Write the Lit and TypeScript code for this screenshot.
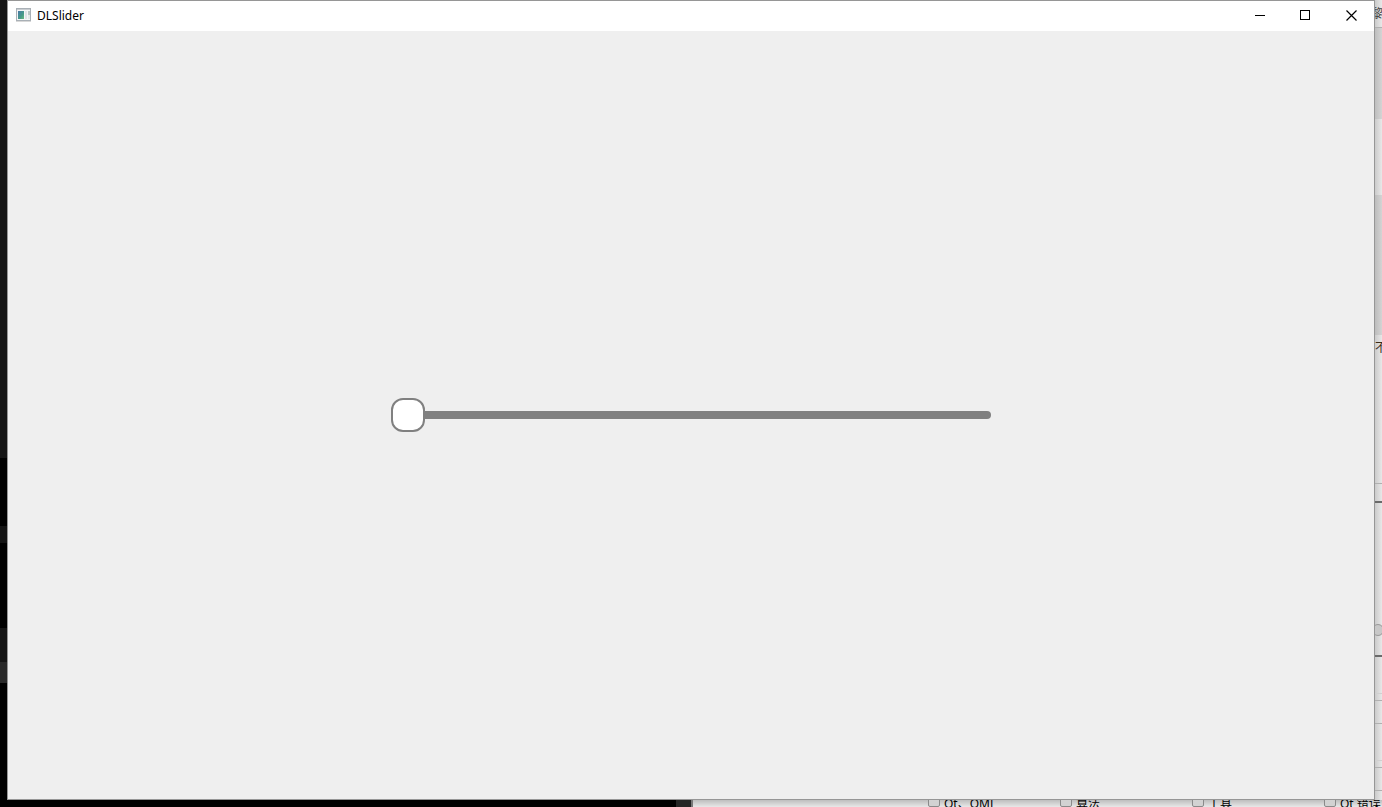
import { LitElement, html, css, svg } from "lit";
import { customElement, state } from "lit/decorators.js";

/* Colour bands of the dark editor visible left of the window. */
const EDITOR_BANDS: Array<[number, string]> = [
  [458, "#151515"],
  [68, "#000000"],
  [17, "#141414"],
  [85, "#000000"],
  [34, "#151515"],
  [21, "#292929"],
  [117, "#000000"],
];

const CATEGORIES = ["Qt、QML", "算法", "工具", "Qt 错误"];

@customElement("app-root")
export class AppRoot extends LitElement {
  @state() private value = 0;

  static styles = css`
    :host {
      display: block;
      height: 100vh;
      overflow: hidden;
      font-family: "Noto Sans", "Noto Sans CJK SC", sans-serif;
      font-size: 12px;
      color: #000;
    }
    * {
      box-sizing: border-box;
    }
    .desktop {
      height: 100%;
      display: grid;
      grid-template-columns: 7px minmax(0, 1fr) 7px;
      grid-template-rows: minmax(0, 1fr) 7px;
    }
    .editor {
      overflow: hidden;
      background: #000;
    }
    .window {
      display: flex;
      flex-direction: column;
      border: 1px solid #969696;
      background: #efefef;
    }
    .titlebar {
      display: flex;
      align-items: center;
      height: 30px;
      flex: none;
      padding-left: 8px;
      background: #fff;
    }
    .app-icon {
      width: 16px;
      height: 16px;
      margin-right: 5px;
    }
    .title {
      flex: 1;
      margin: 0;
      font-size: 12px;
      line-height: 16px;
      font-weight: 400;
    }
    .control {
      display: grid;
      place-items: center;
      width: 45px;
      height: 28px;
      margin-bottom: 2px;
      padding: 0;
      border: 0;
      background: transparent;
    }
    .control.close {
      width: 46px;
    }
    .control svg {
      display: block;
    }
    .client {
      flex: 1;
      display: grid;
      place-items: center;
    }
    .slider {
      appearance: none;
      display: block;
      width: 600px;
      max-width: 90%;
      height: 34px;
      margin: 0;
      background: transparent;
      outline: none;
    }
    .slider::-webkit-slider-runnable-track {
      height: 8px;
      border-radius: 4px;
      background: #808080;
    }
    .slider::-webkit-slider-thumb {
      appearance: none;
      width: 34px;
      height: 34px;
      margin-top: -13px;
      border: 2px solid #808080;
      border-radius: 12px;
      background: #fff;
    }
    .side {
      display: flex;
      flex-direction: column;
      overflow: hidden;
      background: linear-gradient(90deg, #cbcbcb, #e8e8e8);
    }
    .side > div {
      flex: none;
      overflow: hidden;
      white-space: nowrap;
      border-bottom: 1px solid #b0b0b0;
    }
    .side .tab {
      display: flex;
      height: 28px;
      padding-top: 6px;
      line-height: 16px;
      color: #444;
    }
    .side .tab span {
      margin-left: -4px;
    }
    .side .upper {
      height: 91px;
      border: 0;
      background: linear-gradient(90deg, #bebebe, #d4d4d4);
    }
    .side .light {
      height: 76px;
      border: 0;
    }
    .side .middle {
      height: 140px;
      border: 0;
      background: linear-gradient(90deg, #bcbcbc, #d4d4d4);
    }
    .side .note {
      height: 149px;
      padding-top: 5px;
      line-height: 16px;
      color: #3b2b18;
    }
    .side .h18 {
      height: 19px;
      border-bottom: 2px solid #6a6a6a;
    }
    .side .radio-row {
      height: 154px;
      padding-top: 121px;
      border-bottom: 2px solid #6a6a6a;
    }
    .side .h38 {
      height: 37px;
      border-color: #d0d0d0;
    }
    .side .h7 {
      height: 7px;
    }
    .side .h23 {
      height: 23px;
    }
    .side .h37 {
      height: 37px;
      border-color: #d0d0d0;
    }
    .radio {
      appearance: none;
      display: block;
      width: 12px;
      height: 12px;
      margin: 0 0 0 -3px;
      border: 1px solid #999;
      border-radius: 50%;
      background: #c8c8c8;
    }
    .bottom {
      grid-column: 1 / -1;
      display: flex;
      overflow: hidden;
      background: #000;
    }
    .console {
      flex: 1;
      border-right: 15px solid #252525;
    }
    .form {
      display: flex;
      align-items: flex-end;
      width: 691px;
      padding-left: 235px;
      border-left: 2px solid #777;
      background: linear-gradient(#bebebe, #e8e8e8);
    }
    .category {
      flex: none;
      display: flex;
      align-items: flex-end;
      gap: 4px;
      width: 132px;
      height: 14px;
      line-height: 14px;
      white-space: nowrap;
    }
    .category span {
      height: 10px;
    }
    .check {
      appearance: none;
      flex: none;
      width: 12px;
      height: 12px;
      margin: 0;
      border: 1px solid #8a8a8a;
      border-radius: 2px;
      background: #d2d2d2;
    }
  `;

  private onInput(event: Event) {
    this.value = Number((event.target as HTMLInputElement).value);
  }

  private appIcon() {
    return svg`<svg class="app-icon" viewBox="0 0 16 16" shape-rendering="crispEdges" aria-hidden="true">
      <defs>
        <linearGradient id="pane" x1="0" y1="0" x2="1" y2="1">
          <stop offset="0" stop-color="#4a78a8"></stop>
          <stop offset="0.6" stop-color="#459a88"></stop>
          <stop offset="1" stop-color="#6bb87c"></stop>
        </linearGradient>
      </defs>
      <path d="M0 0h15v13H0z" fill="#a9b0b6"></path>
      <path d="M0 13h15v1H0z" fill="#d8d8d8"></path>
      <path d="M1 2h13v10H1z" fill="#f4f5f6"></path>
      <path d="M1 1h13v1H1z" fill="#c9cdd1"></path>
      <path d="M2 3h6v8H2z" fill="url(#pane)"></path>
      <path d="M9 3h2v8H9z" fill="#dfe3e6"></path>
      <path d="M12 3h2v4h-2z" fill="#b9c6c4"></path>
      <path d="M12 7h2v4h-2z" fill="#e4e8e8"></path>
    </svg>`;
  }

  render() {
    return html`
      <div class="desktop">
        <div class="editor">
          ${EDITOR_BANDS.map(
            ([height, color]) =>
              html`<div style="height:${height}px;background:${color}"></div>`
          )}
        </div>
        <main class="window">
          <header class="titlebar">
            ${this.appIcon()}
            <h1 class="title">DLSlider</h1>
            <button class="control" aria-label="Minimize">
              <svg width="11" height="11" shape-rendering="crispEdges">
                <path d="M0 5h10v1H0z"></path>
              </svg>
            </button>
            <button class="control" aria-label="Maximize">
              <svg width="11" height="11" viewBox="0 0 11 11" shape-rendering="crispEdges">
                <path d="M0.5 0.5h9v9h-9z" fill="none" stroke="#000"></path>
              </svg>
            </button>
            <button class="control close" aria-label="Close">
              <svg width="11" height="11" viewBox="0 0 11 11">
                <path d="M0.5 0.5l10 10M10.5 0.5l-10 10" fill="none" stroke="#000" stroke-width="1.2"></path>
              </svg>
            </button>
          </header>
          <section class="client">
            <input
              class="slider"
              type="range"
              min="0"
              max="100"
              aria-label="DLSlider"
              .value=${String(this.value)}
              @input=${this.onInput}
            />
          </section>
        </main>
        <div class="side">
          <div class="tab"><span>黎</span></div>
          <div class="upper"></div>
          <div class="light"></div>
          <div class="middle"></div>
          <div class="note">不</div>
          <div class="h18"></div>
          <div class="radio-row">
            <input class="radio" type="radio" aria-label="Option" />
          </div>
          <div class="h38"></div>
          <div class="h7"></div>
          <div class="h23"></div>
          <div class="h37"></div>
          <div class="h7"></div>
          <div class="h23"></div>
        </div>
        <div class="bottom">
          <div class="console"></div>
          <div class="form">
            ${CATEGORIES.map(
              (name) => html`<label class="category">
                <input class="check" type="checkbox" /><span>${name}</span>
              </label>`
            )}
          </div>
        </div>
      </div>
    `;
  }
}
